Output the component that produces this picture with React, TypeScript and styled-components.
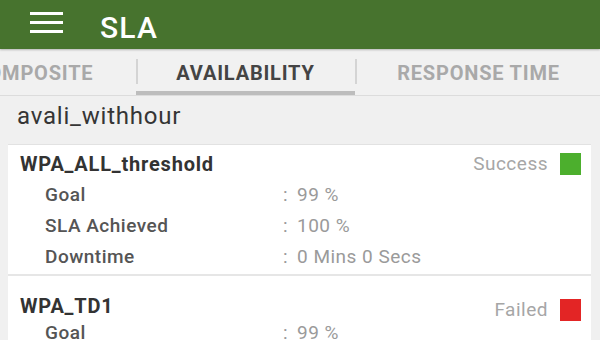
import React from 'react';
import styled, {createGlobalStyle} from "styled-components";

const GlobalStyle = createGlobalStyle`
  html, body {
    margin: 0;
    padding: 0;
    background: #f0f0f0;
    font-family: Roboto, "Liberation Sans", sans-serif;
    overflow: hidden;
  }
`

type Status = "success" | "failed";

interface SlaItem {
    name: string;
    status: Status;
    rows: [string, string][];
}

const items: SlaItem[] = [
    {
        name: "WPA_ALL_threshold",
        status: "success",
        rows: [["Goal", "99 %"], ["SLA Achieved", "100 %"], ["Downtime", "0 Mins 0 Secs"]],
    },
    {
        name: "WPA_TD1",
        status: "failed",
        rows: [["Goal", "99 %"], ["SLA Achieved", "98 %"], ["Downtime", "12 Mins 4 Secs"]],
    },
];

const tabs = [
    {title: "COMPOSITE", width: 205},
    {title: "AVAILABILITY", width: 219},
    {title: "RESPONSE TIME", width: 247},
];

export default function App() {
    return (
        <Screen>
            <GlobalStyle/>
            <AppBar>
                <MenuIcon>
                    <span/><span/><span/>
                </MenuIcon>
                <Title>SLA</Title>
            </AppBar>
            <TabBar>
                {tabs.map((t, i) => (
                    <Tab key={t.title} width={t.width} active={i === 1} first={i === 0}>{t.title}</Tab>
                ))}
            </TabBar>
            <GroupName>avali_withhour</GroupName>
            <Card>
                {items.map(item => (
                    <Item key={item.name}>
                        <ItemHead>
                            <ItemName>{item.name}</ItemName>
                            <StatusBox status={item.status}>
                                {item.status === "success" ? "Success" : "Failed"}
                                <StatusSquare status={item.status}/>
                            </StatusBox>
                        </ItemHead>
                        {item.rows.map(([label, value]) => (
                            <Row key={label}>
                                <Label>{label}</Label>
                                <Colon>:</Colon>
                                <Value>{value}</Value>
                            </Row>
                        ))}
                    </Item>
                ))}
            </Card>
        </Screen>
    );
}

const Screen = styled.div`
  width: 600px;
  height: 340px;
  overflow: hidden;
  background: #f0f0f0;
`

const AppBar = styled.div`
  height: 49px;
  background-color: #47732e;
  display: flex;
  align-items: flex-start;
  padding-left: 30px;
  box-sizing: border-box;
  box-shadow: 0 1px 2px rgba(0, 0, 0, 0.25);
  position: relative;
  z-index: 1;
`

const MenuIcon = styled.div`
  width: 33px;
  display: flex;
  flex-direction: column;
  gap: 6px;
  margin-top: 12px;

  span {
    display: block;
    height: 3px;
    background: #fff;
  }
`

const Title = styled.h1`
  margin: 10px 0 0 37px;
  font-size: 30px;
  font-weight: 500;
  letter-spacing: 1.2px;
  color: #fff;
  line-height: 36px;
`

const TabBar = styled.div`
  display: flex;
  height: 46px;
  margin-left: -69px;
  border-bottom: 1px solid #dcdcdc;
  background: #f1f1f1;
`

const Tab = styled.div<{ width: number; active?: boolean; first?: boolean }>`
  flex: 0 0 ${p => p.width}px;
  display: flex;
  align-items: center;
  justify-content: center;
  position: relative;
  font-size: 20px;
  font-weight: 700;
  letter-spacing: 0.8px;
  white-space: nowrap;
  color: ${p => p.active ? "#444" : "#a9a9a9"};
  border-bottom: 4px solid ${p => p.active ? "#bdbdbd" : "transparent"};
  box-sizing: border-box;
  padding-top: 5px;

  &::before {
    content: "";
    display: ${p => p.first ? "none" : "block"};
    position: absolute;
    left: 0;
    top: 10px;
    bottom: 7px;
    width: 2px;
    background: #d4d4d4;
  }
`

const GroupName = styled.div`
  font-size: 24px;
  letter-spacing: 0.8px;
  color: #353535;
  padding: 6px 0 0 17px;
  height: 44px;
  box-sizing: border-box;
`

const Card = styled.div`
  margin: 4px 9px 0 8px;
  background: #fff;
  border-top: 1px solid #e2e2e2;
`

const ItemHead = styled.div`
  display: flex;
  justify-content: space-between;
  align-items: flex-start;
  height: 23px;
`

const Item = styled.div`
  padding: 18px 10px 2px 12px;
  border-bottom: 2px solid #e6e6e6;

  &:first-child {
    padding-top: 7px;
  }

  &:first-child ${ItemHead} {
    height: 27px;
  }
`

const ItemName = styled.div`
  font-size: 20px;
  font-weight: 700;
  letter-spacing: 0.8px;
  color: #333;
`

const StatusBox = styled.div<{ status: Status }>`
  display: flex;
  align-items: center;
  gap: 12px;
  font-size: 19px;
  letter-spacing: 0.5px;
  color: #a6a6a6;
  margin-top: ${p => p.status === "failed" ? "4px" : "0"};
`

const StatusSquare = styled.span<{ status: Status }>`
  display: inline-block;
  width: 21px;
  height: 22px;
  background: ${p => p.status === "success" ? "#4caf2d" : "#e32525"};
`

const Row = styled.div`
  display: flex;
  align-items: center;
  height: 31px;
  font-size: 19px;
  letter-spacing: 0.5px;
`

const Label = styled.div`
  width: 238px;
  padding-left: 25px;
  font-weight: 500;
  color: #555;
`

const Colon = styled.div`
  width: 14px;
  color: #999;
`

const Value = styled.div`
  color: #9a9a9a;
`
